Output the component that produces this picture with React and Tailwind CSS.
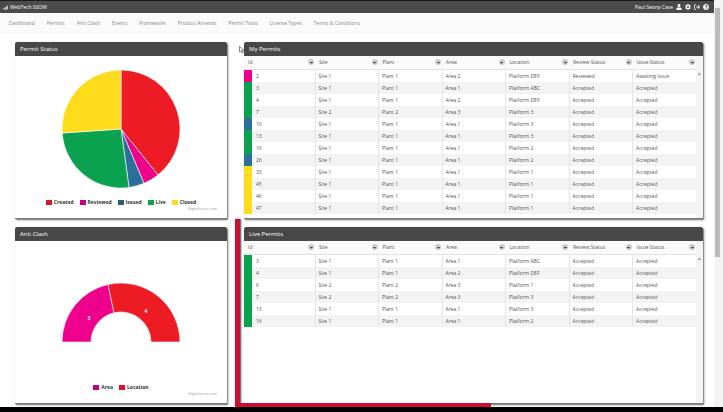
import { FaUser, FaCog, FaQuestionCircle, FaSignal, FaCaretDown } from "react-icons/fa"
import { FaArrowRightFromBracket } from "react-icons/fa6"

const navLinks = ['Dashboard', 'Permits', 'Anti Clash', 'Events', 'Framework', 'Product Amends', 'Permit Tools', 'License Types', 'Terms & Conditions']

const columns = ['Id', 'Site', 'Plant', 'Area', 'Location', 'Review Status', 'Issue Status']

const pink = 'bg-[#ec008c]'
const green = 'bg-[#0aa14f]'
const blue = 'bg-[#2d6f9b]'
const yellow = 'bg-[#fddc1c]'

const myPermits = [
  [pink, '2', 'Site 1', 'Plant 1', 'Area 2', 'Platform DEF', 'Reviewed', 'Awaiting Issue'],
  [green, '3', 'Site 1', 'Plant 1', 'Area 1', 'Platform ABC', 'Accepted', 'Accepted'],
  [green, '4', 'Site 1', 'Plant 1', 'Area 2', 'Platform DEF', 'Accepted', 'Accepted'],
  [green, '7', 'Site 2', 'Plant 2', 'Area 3', 'Platform 3', 'Accepted', 'Accepted'],
  [blue, '10', 'Site 1', 'Plant 1', 'Area 1', 'Platform 3', 'Accepted', 'Accepted'],
  [green, '13', 'Site 1', 'Plant 1', 'Area 1', 'Platform 3', 'Accepted', 'Accepted'],
  [green, '16', 'Site 1', 'Plant 1', 'Area 1', 'Platform 2', 'Accepted', 'Accepted'],
  [blue, '26', 'Site 1', 'Plant 1', 'Area 1', 'Platform 2', 'Accepted', 'Accepted'],
  [yellow, '33', 'Site 1', 'Plant 1', 'Area 1', 'Platform 1', 'Accepted', 'Accepted'],
  [yellow, '45', 'Site 1', 'Plant 1', 'Area 1', 'Platform 1', 'Accepted', 'Accepted'],
  [yellow, '46', 'Site 1', 'Plant 1', 'Area 1', 'Platform 1', 'Accepted', 'Accepted'],
  [yellow, '47', 'Site 1', 'Plant 1', 'Area 1', 'Platform 1', 'Accepted', 'Accepted'],
]

const livePermits = [
  [green, '3', 'Site 1', 'Plant 1', 'Area 1', 'Platform ABC', 'Accepted', 'Accepted'],
  [green, '4', 'Site 1', 'Plant 1', 'Area 2', 'Platform DEF', 'Accepted', 'Accepted'],
  [green, '6', 'Site 2', 'Plant 2', 'Area 3', 'Platform 1', 'Accepted', 'Accepted'],
  [green, '7', 'Site 2', 'Plant 2', 'Area 3', 'Platform 3', 'Accepted', 'Accepted'],
  [green, '13', 'Site 1', 'Plant 1', 'Area 1', 'Platform 3', 'Accepted', 'Accepted'],
  [green, '16', 'Site 1', 'Plant 1', 'Area 1', 'Platform 2', 'Accepted', 'Accepted'],
]

function Panel({ title, children }) {
  return (
    <section className="flex h-[177px] min-w-0 flex-col rounded-t-xs border-b border-[#777] bg-white shadow-[1px_1px_2px_#666]">
      <h2 className="h-[14px] shrink-0 rounded-t-xs bg-[#484848] pl-[5px] text-[6px] leading-[14px] text-white">{title}</h2>
      {children}
    </section>
  )
}

function PermitTable({ rows }) {
  return (
    <div className="flex min-h-0 flex-1">
      <div className="min-w-0 flex-1">
        <table className="w-full table-fixed text-left text-[5px] leading-[12px] text-[#555]">
          <thead>
            <tr className="h-[13px] bg-[#fafafa]">
              {columns.map((column, i) => (
                <th key={column} className={`${i === 0 ? 'w-[71px]' : ''} border-b border-[#e2e2e2] p-0 pl-[4px] font-normal`}>
                  <div className="flex items-center justify-between">
                    {column}
                    <button aria-label={`Filter ${column}`} className="mr-[1px] flex size-[6px] items-center justify-center rounded-full bg-[#ccc] text-[#333]">
                      <FaCaretDown size={5} />
                    </button>
                  </div>
                </th>
              ))}
            </tr>
          </thead>
          <tbody>
            {rows.map(([color, id, ...cells]) => (
              <tr key={id} className="h-[12px] even:bg-[#f3f3f3]">
                <td className="p-0">
                  <div className="flex h-[12px]">
                    <span className={`w-[8px] ${color}`}></span>
                    <span className="pl-[4px]">{id}</span>
                  </div>
                </td>
                {cells.map((cell, i) => (
                  <td key={i} className="border-l border-[#e4e4e4] p-0 pl-[3px]">{cell}</td>
                ))}
              </tr>
            ))}
          </tbody>
        </table>
      </div>
      {/* Table scroll gutter */}
      <div className="w-[7px] bg-[#f3f3f3] pt-[13px] text-center text-[5px] leading-[8px] text-[#888]">&#9652;</div>
    </div>
  )
}

function Legend({ items }) {
  return (
    <ul className="flex justify-center gap-[6px] text-[5px] font-bold leading-[6px] text-[#333]">
      {items.map(([label, color]) => (
        <li key={label} className="flex items-center gap-[2px]">
          <span className={`h-[5px] w-[6px] ${color}`}></span>
          {label}
        </li>
      ))}
    </ul>
  )
}

function StatusPie() {
  return (
    <svg viewBox="-60 -60 120 120" className="size-[120px]" stroke="#fff" strokeWidth="0.6">
      <path d="M0 0V-59A59 59 0 0 1 37 46Z" fill="#ed1c24" />
      <path d="M0 0L37 46A59 59 0 0 1 23 54.3Z" fill="#ec008c" />
      <path d="M0 0L23 54.3A59 59 0 0 1 8 58.5Z" fill="#2d6f9b" />
      <path d="M0 0L8 58.5A59 59 0 0 1 -58.8 4Z" fill="#0aa14f" />
      <path d="M0 0L-58.8 4A59 59 0 0 1 0 -59Z" fill="#fddc1c" />
    </svg>
  )
}

function ClashChart() {
  return (
    <svg viewBox="-60 -60 120 61" className="h-[61px] w-[120px]">
      <g stroke="#fff" strokeWidth="0.6">
        <path d="M-59 0A59 59 0 0 1 -13 -57.5L-7 -29.2A30 30 0 0 0 -30 0Z" fill="#ec008c" />
        <path d="M-13 -57.5A59 59 0 0 1 59 0H30A30 30 0 0 0 -7 -29.2Z" fill="#ed1c24" />
      </g>
      <g className="text-[5px] font-bold" fill="#fff" textAnchor="middle">
        <text x="-32" y="-22">3</text>
        <text x="25" y="-29">4</text>
      </g>
    </svg>
  )
}

function App() {
  return (
    <div className="relative flex min-h-screen bg-white font-['Open_Sans','Noto_Sans',sans-serif]">
      <div className="flex min-w-0 flex-1 flex-col">
        <header className="flex h-[13px] items-center justify-between border-t border-[#1c1c1c] bg-[#4b4b4b] pl-[3px] pr-[5px] text-[5px] leading-[12px] text-white">
          <div className="flex items-center gap-[2px]"><FaSignal size={5} /> WebTech SSOW</div>
          <div className="flex items-center gap-[3px]">
            <span>Paul Seony Case</span>
            <FaUser size={6} />
            <FaCog size={6} />
            <FaArrowRightFromBracket size={6} />
            <FaQuestionCircle size={6} />
          </div>
        </header>

        <nav className="flex h-[21px] items-center gap-[12px] bg-[#fafafa] pl-[9px] text-[5px] text-[#888]">
          {navLinks.map(link => <a key={link} href="#" className="whitespace-nowrap">{link}</a>)}
        </nav>

        <main className="grid grid-cols-[212fr_459fr] gap-x-[17px] gap-y-[8px] pl-[15px] pr-[11px] pt-[8px]">
          <Panel title="Permit Status">
            <div className="flex flex-1 flex-col items-center pt-[13px]">
              <StatusPie />
              <div className="pt-[10px]">
                <Legend items={[['Created', 'bg-[#d9142f]'], ['Reviewed', 'bg-[#c4007a]'], ['Issued', 'bg-[#2b5f78]'], ['Live', 'bg-[#0aa14f]'], ['Closed', 'bg-[#fddc1c]']]} />
              </div>
              <span className="self-end pr-[10px] text-[4px] leading-[8px] text-[#999]">Highcharts.com</span>
            </div>
          </Panel>
          <Panel title="My Permits">
            <PermitTable rows={myPermits} />
          </Panel>
          <Panel title="Anti Clash">
            <div className="flex flex-1 flex-col items-center pt-[41px]">
              <ClashChart />
              <div className="pt-[41px]">
                <Legend items={[['Area', 'bg-[#c4008c]'], ['Location', 'bg-[#d9142f]']]} />
              </div>
              <span className="self-end pr-[10px] text-[4px] leading-[8px] text-[#999]">Highcharts.com</span>
            </div>
          </Panel>
          <Panel title="Live Permits">
            <PermitTable rows={livePermits} />
          </Panel>
        </main>
      </div>

      {/* Page scrollbar */}
      <div className="w-[9px] bg-[#f4f4f4] pt-[8px]">
        <div className="ml-[1px] h-[249px] w-[5px] bg-[#bcbcbc]"></div>
      </div>

      {/* Highlight around the live permits */}
      <div className="absolute left-[235px] top-[219px] h-[188px] w-[5px] bg-[#cc1030] shadow-[1px_0_2px_#444]"></div>
      <div className="absolute left-[235px] top-[403px] h-[4px] w-[256px] bg-[#cc1030]"></div>
      <div className="absolute inset-x-0 bottom-0 h-[5px] bg-black"></div>
      <svg viewBox="0 0 6 8" className="absolute left-[239px] top-[46px] h-[8px] w-[6px]" fill="#fff" stroke="#555" strokeWidth="0.7">
        <path d="M0.5 0.5V6L2 4.8L3 7L4 6.5L3 4.3H5Z" />
      </svg>
    </div>
  )
}

export default App
